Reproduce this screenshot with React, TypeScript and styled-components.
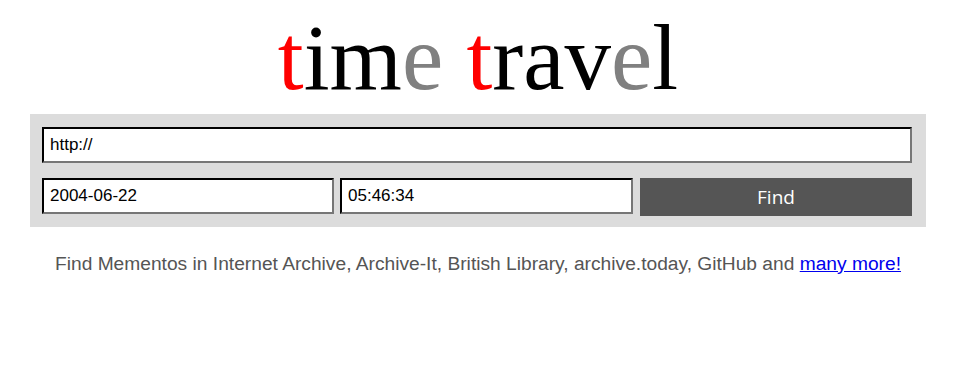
import styled, { createGlobalStyle } from 'styled-components';

const GlobalStyle = createGlobalStyle`
  body {
    margin: 0;
    background: #fff;
    font-family: "Liberation Sans", Arial, sans-serif;
  }
`;

const Page = styled.div`
  display: flex;
  flex-direction: column;
  align-items: center;
  padding-top: 8px;
`;

const Title = styled.h1`
  margin: 0;
  font-family: "Liberation Serif", "Times New Roman", serif;
  font-weight: normal;
  font-size: 93px;
  line-height: 100px;
  color: #000;
`;

const Letter = styled.span<{ $tone: 'red' | 'gray' }>`
  color: ${(p) => (p.$tone === 'red' ? '#ff0000' : '#808080')};
`;

const Panel = styled.form`
  box-sizing: border-box;
  width: 896px;
  margin-top: 6px;
  padding: 13px 14px 11px 12px;
  background: #dcdcdc;
  display: flex;
  flex-direction: column;
  gap: 15px;
`;

const Row = styled.div`
  display: flex;
  gap: 6px;
`;

const Field = styled.input<{ $width?: number }>`
  box-sizing: border-box;
  height: 36px;
  width: ${(p) => (p.$width ? `${p.$width}px` : '100%')};
  padding: 0 6px;
  border: 2px inset #767676;
  border-top-color: #222;
  border-left-color: #222;
  background: #fff;
  font-family: "Liberation Sans", Arial, sans-serif;
  font-size: 17px;
  color: #000;
  outline: none;
`;

const FindButton = styled.button`
  flex: 1;
  height: 38px;
  margin-left: 1px;
  border: none;
  background: #555;
  color: #fff;
  font-family: "Open Sans", "Liberation Sans", sans-serif;
  font-size: 19px;
  cursor: pointer;
`;

const Note = styled.p`
  margin: 26px 0 0;
  font-size: 19.2px;
  line-height: 22px;
  color: #555;

  a {
    color: #0000ee;
  }
`;

export default function App() {
  return (
    <>
      <GlobalStyle />
      <Page>
        <Title>
          <Letter $tone="red">t</Letter>im<Letter $tone="gray">e</Letter>{' '}
          <Letter $tone="red">t</Letter>rav<Letter $tone="gray">e</Letter>l
        </Title>
        <Panel onSubmit={(e) => e.preventDefault()}>
          <Field defaultValue="http://" />
          <Row>
            <Field $width={292} defaultValue="2004-06-22" />
            <Field $width={293} defaultValue="05:46:34" />
            <FindButton type="submit">Find</FindButton>
          </Row>
        </Panel>
        <Note>
          Find Mementos in Internet Archive, Archive-It, British Library, archive.today, GitHub and{' '}
          <a href="#">many more!</a>
        </Note>
      </Page>
    </>
  );
}
